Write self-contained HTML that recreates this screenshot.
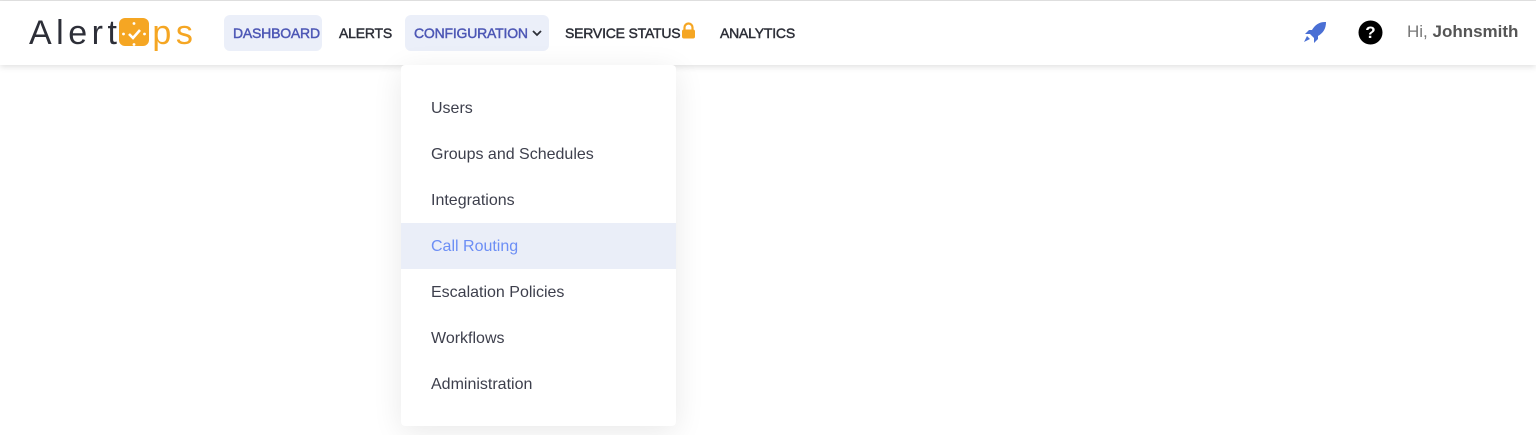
<!DOCTYPE html>
<html><head><style>
*{margin:0;padding:0;box-sizing:border-box}
body{width:1536px;height:435px;background:#fff;font-family:"Liberation Sans",sans-serif;position:relative;overflow:hidden}
.top{position:absolute;left:0;top:0;width:1536px;height:1px;background:#e4e4e4}
.hdr{position:absolute;left:0;top:1px;width:1536px;height:64px;background:#fff;box-shadow:0 2px 6px rgba(0,0,0,.12);z-index:2}
.logo{position:absolute;left:29px;top:13px;font-size:34px;color:#2d2f38;letter-spacing:4.5px;white-space:nowrap}
.logo .o{display:inline-block;width:30px;height:28px;background:#f5a623;border-radius:6px;vertical-align:-4px;margin:0 3px 0 -2px;position:relative}
.logo .ps{color:#f5a623}
.nav{position:absolute;top:14px;height:36px;font-size:14px;color:#2d2f38;line-height:36px;padding:0 9px;border-radius:6px;-webkit-text-stroke:0.45px #2d2f38;white-space:nowrap;letter-spacing:-0.2px}
.act{background:#ebeff9;color:#4d57b5;-webkit-text-stroke:0.45px #4d57b5}
.dd{position:absolute;left:401px;top:65px;width:275px;height:361px;background:#fff;border-radius:4px;box-shadow:0 6px 30px rgba(0,0,0,.09);z-index:3}
.it{position:absolute;left:0;width:275px;height:46px;line-height:46px;padding-left:30px;font-size:16px;color:#3d3f4c}
.hl{background:#eaeef8;color:#6c8ef5}
</style></head><body>
<div class="top"></div>
<div class="hdr">
<div class="logo">Alert<span class="o"><svg width="30" height="28" viewBox="0 0 30 28"><path d="M10 14l4 4 7-8" fill="none" stroke="#fff" stroke-width="2.6"/><circle cx="15" cy="3.5" r="1.4" fill="#fff"/><circle cx="15" cy="24.5" r="1.4" fill="#fff"/><circle cx="4.5" cy="14" r="1.4" fill="#fff"/><circle cx="25.5" cy="14" r="1.4" fill="#fff"/></svg></span><span class="ps">ps</span></div>
<div class="nav act" style="left:224px;width:98px">DASHBOARD</div>
<div class="nav" style="left:330px">ALERTS</div>
<div class="nav act" style="left:405px;width:144px">CONFIGURATION<svg style="position:absolute;left:127px;top:14px" width="10" height="8" viewBox="0 0 10 8"><path d="M1 2l4 4 4-4" fill="none" stroke="#2d2f38" stroke-width="1.8"/></svg></div>
<div class="nav" style="left:556px">SERVICE STATUS</div>
<svg style="position:absolute;left:681px;top:21px" width="15" height="17" viewBox="0 0 15 17"><path d="M3.5 8V5.5a4 4 0 0 1 8 0V8" fill="none" stroke="#f5a623" stroke-width="2.2"/><rect x="1" y="7.5" width="13" height="9" rx="2" fill="#f5a623"/></svg>
<div class="nav" style="left:711px">ANALYTICS</div>
<svg style="position:absolute;left:1303px;top:20px" width="24" height="22" viewBox="0 0 24 22"><path d="M22 1c-6 0-10 3-13 8l-3 0-4 4 5 0 4 4 0 5 4-4 0-3c5-3 8-7 8-14z" fill="#4a6fd4"/><path d="M4 15l-3 6 6-3z" fill="#4a6fd4"/></svg>
<svg style="position:absolute;left:1358px;top:19px" width="25" height="25" viewBox="0 0 25 25"><circle cx="12.5" cy="12.5" r="12" fill="#000"/><text x="12.5" y="18" text-anchor="middle" font-family="Liberation Sans" font-weight="bold" font-size="17" fill="#fff">?</text></svg>
<div style="position:absolute;left:1407px;top:21px;font-size:17px;color:#777;white-space:nowrap">Hi, <b style="color:#555">Johnsmith</b></div>
</div>
<div class="dd">
<div class="it" style="top:21px">Users</div>
<div class="it" style="top:67px">Groups and Schedules</div>
<div class="it" style="top:113px">Integrations</div>
<div class="it hl" style="top:158px;line-height:48px">Call Routing</div>
<div class="it" style="top:205px">Escalation Policies</div>
<div class="it" style="top:251px">Workflows</div>
<div class="it" style="top:297px">Administration</div>
</div>
</body></html>
